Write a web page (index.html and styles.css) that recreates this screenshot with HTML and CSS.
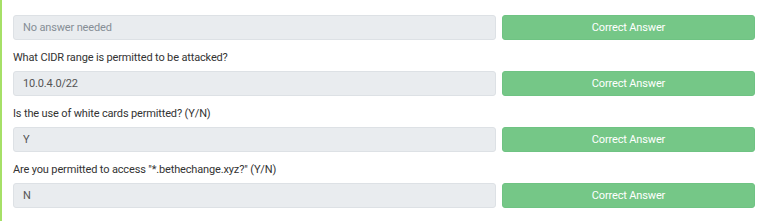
FILE: index.html
```html
<!DOCTYPE html>
<html lang="en">
<head>
    <meta charset="UTF-8">
    <meta name="viewport" content="width=device-width, initial-scale=1.0">
    <title>Task answers</title>
    <link rel="stylesheet" href="styles.css">
</head>
<body>
    <div class="task">
        <div class="question">
            <div class="answer-row">
                <input class="answer placeholder" type="text" value="No answer needed" readonly>
                <button class="btn-correct">Correct Answer</button>
            </div>
        </div>
        <div class="question">
            <p class="label">What CIDR range is permitted to be attacked?</p>
            <div class="answer-row">
                <input class="answer" type="text" value="10.0.4.0/22" readonly>
                <button class="btn-correct">Correct Answer</button>
            </div>
        </div>
        <div class="question">
            <p class="label">Is the use of white cards permitted? (Y/N)</p>
            <div class="answer-row">
                <input class="answer" type="text" value="Y" readonly>
                <button class="btn-correct">Correct Answer</button>
            </div>
        </div>
        <div class="question">
            <p class="label">Are you permitted to access "*.bethechange.xyz?" (Y/N)</p>
            <div class="answer-row">
                <input class="answer" type="text" value="N" readonly>
                <button class="btn-correct">Correct Answer</button>
            </div>
        </div>
    </div>
</body>
</html>
```
FILE: styles.css
```css
body{
    margin: 0;
    background: #fff;
    font-family: Roboto, "Noto Sans", sans-serif;
}
.task{
    border-left: 2px solid #a6e067;
    padding: 15px 13px 13px 11px;
    height: 221px;
    box-sizing: border-box;
}
.question{
    margin-bottom: 10px;
}
.question:last-child{
    margin-bottom: 0;
}
.label{
    margin: 0 0 5px 0;
    font-size: 11px;
    letter-spacing: -0.15px;
    line-height: 16px;
    color: #333;
}
.question:last-child .label{
    margin-top: 1px;
}
.answer-row{
    display: grid;
    grid-template-columns: 483px 253px;
    gap: 6px;
}
.answer{
    height: 25px;
    box-sizing: border-box;
    border: 1px solid #dde1e5;
    border-radius: 3px;
    background: #e9ecef;
    padding: 0 9px;
    font-family: inherit;
    font-size: 11px;
    letter-spacing: -0.15px;
    color: #555;
    outline: none;
}
.answer.placeholder{
    color: #868e96;
}
.btn-correct{
    height: 25px;
    border: 1px solid #6fc383;
    border-radius: 3px;
    background: #75c787;
    color: #fff;
    font-family: inherit;
    font-size: 11px;
    letter-spacing: -0.15px;
    padding: 0;
}
```
